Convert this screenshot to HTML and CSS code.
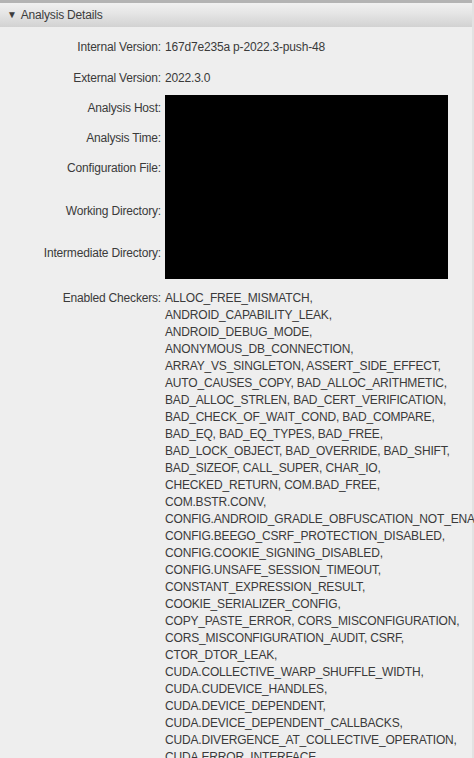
FILE: index.html
```html
<!DOCTYPE html>
<html lang="en">
<head>
    <meta charset="UTF-8">
    <title>Analysis Details</title>
    <link rel="stylesheet" href="styles.css">
</head>
<body>
    <div class="panel">
        <div class="panel-header">
            <span class="toggle">&#9660;</span>
            <span class="panel-title">Analysis Details</span>
        </div>

        <div class="details">
            <div class="label">Internal Version:</div>
            <div class="value">167d7e235a p-2022.3-push-48</div>

            <div class="label">External Version:</div>
            <div class="value">2022.3.0</div>

            <div class="label">Analysis Host:</div>
            <div class="redacted"></div>

            <div class="label">Analysis Time:</div>

            <div class="label">Configuration File:</div>

            <div class="label">Working Directory:</div>

            <div class="label">Intermediate Directory:</div>

            <div class="label">Enabled Checkers:</div>
            <div class="value checkers">
                <span>ALLOC_FREE_MISMATCH,</span>
                <span>ANDROID_CAPABILITY_LEAK,</span>
                <span>ANDROID_DEBUG_MODE,</span>
                <span>ANONYMOUS_DB_CONNECTION,</span>
                <span>ARRAY_VS_SINGLETON, ASSERT_SIDE_EFFECT,</span>
                <span>AUTO_CAUSES_COPY, BAD_ALLOC_ARITHMETIC,</span>
                <span>BAD_ALLOC_STRLEN, BAD_CERT_VERIFICATION,</span>
                <span>BAD_CHECK_OF_WAIT_COND, BAD_COMPARE,</span>
                <span>BAD_EQ, BAD_EQ_TYPES, BAD_FREE,</span>
                <span>BAD_LOCK_OBJECT, BAD_OVERRIDE, BAD_SHIFT,</span>
                <span>BAD_SIZEOF, CALL_SUPER, CHAR_IO,</span>
                <span>CHECKED_RETURN, COM.BAD_FREE,</span>
                <span>COM.BSTR.CONV,</span>
                <span>CONFIG.ANDROID_GRADLE_OBFUSCATION_NOT_ENABLED,</span>
                <span>CONFIG.BEEGO_CSRF_PROTECTION_DISABLED,</span>
                <span>CONFIG.COOKIE_SIGNING_DISABLED,</span>
                <span>CONFIG.UNSAFE_SESSION_TIMEOUT,</span>
                <span>CONSTANT_EXPRESSION_RESULT,</span>
                <span>COOKIE_SERIALIZER_CONFIG,</span>
                <span>COPY_PASTE_ERROR, CORS_MISCONFIGURATION,</span>
                <span>CORS_MISCONFIGURATION_AUDIT, CSRF,</span>
                <span>CTOR_DTOR_LEAK,</span>
                <span>CUDA.COLLECTIVE_WARP_SHUFFLE_WIDTH,</span>
                <span>CUDA.CUDEVICE_HANDLES,</span>
                <span>CUDA.DEVICE_DEPENDENT,</span>
                <span>CUDA.DEVICE_DEPENDENT_CALLBACKS,</span>
                <span>CUDA.DIVERGENCE_AT_COLLECTIVE_OPERATION,</span>
                <span>CUDA.ERROR_INTERFACE,</span>
            </div>
        </div>
    </div>
</body>
</html>
```

FILE: styles.css
```css
* {
    margin: 0;
    padding: 0;
    box-sizing: border-box;
    font-family: "Liberation Sans", Arial, sans-serif;
}

html,
body {
    height: 100%;
    overflow: hidden;
}

body {
    background-color: #eeeeee;
    color: #3a3a3a;
    font-size: 12px;
    line-height: 17px;
    letter-spacing: -0.18px;
}

.panel {
    border-right: 2px solid #e2e2e2;
    min-height: 100%;
}

/* header bar */

.panel-header {
    display: flex;
    align-items: center;
    height: 27px;
    border-top: 3px solid #b4b4b4;
    background: linear-gradient(to bottom, #f1f1f1 0%, #e6e6e6 40%, #d2d2d2 100%);
    padding-left: 7px;
    color: #3c3c3c;
}

.toggle {
    font-size: 10px;
    margin-right: 4px;
    line-height: 1;
}

.panel-title {
    font-size: 12px;
}

/* details grid */

.details {
    display: grid;
    grid-template-columns: 161px 1fr;
    grid-template-rows: 31px 30px 30px 30px 43px 42px 45px auto;
    column-gap: 4px;
    padding-top: 12px;
}

.label {
    grid-column: 1;
    text-align: right;
    white-space: nowrap;
}

.value {
    grid-column: 2;
    white-space: nowrap;
}

.redacted {
    grid-column: 2;
    grid-row: 3 / 8;
    align-self: start;
    width: 283px;
    height: 184px;
    margin-top: -5px;
    background-color: #000;
}

.checkers span {
    display: block;
}
```
